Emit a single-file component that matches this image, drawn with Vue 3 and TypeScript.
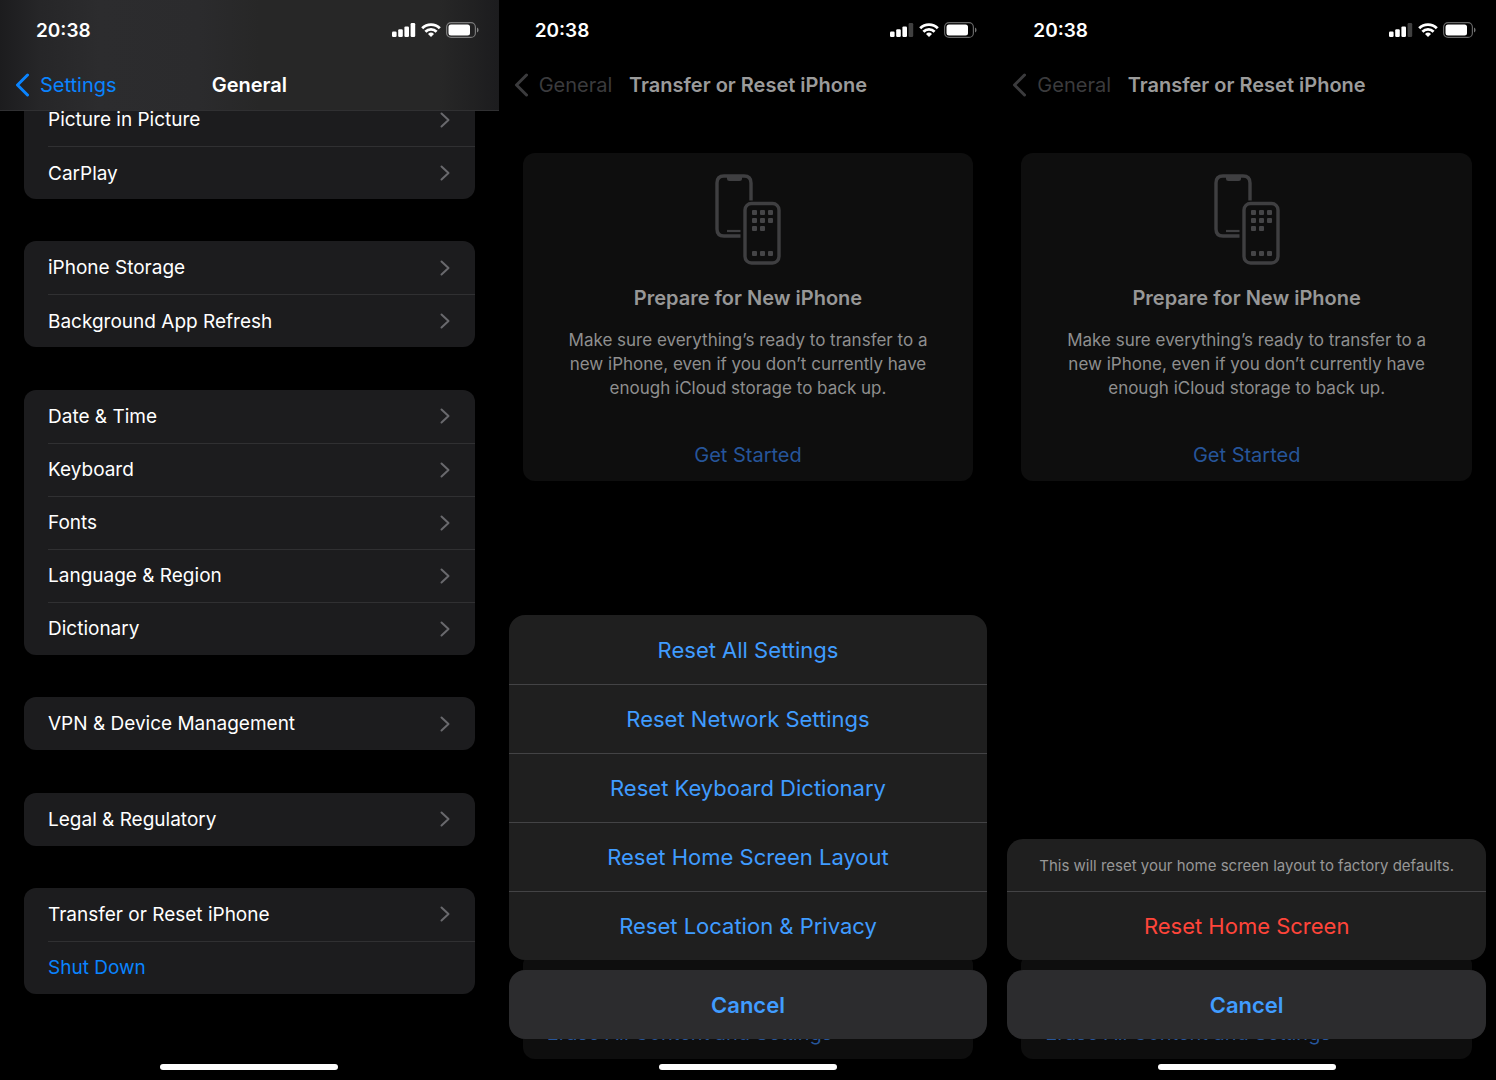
<script setup lang="ts">
interface Row {
  label: string
  action?: boolean
}

interface Phone {
  back: string
  title: string
  dimmed: boolean
  message?: string
  actions: string[]
  destructive?: boolean
}

const groups: Row[][] = [
  [{ label: 'Picture in Picture' }, { label: 'CarPlay' }],
  [{ label: 'iPhone Storage' }, { label: 'Background App Refresh' }],
  [
    { label: 'Date & Time' },
    { label: 'Keyboard' },
    { label: 'Fonts' },
    { label: 'Language & Region' },
    { label: 'Dictionary' },
  ],
  [{ label: 'VPN & Device Management' }],
  [{ label: 'Legal & Regulatory' }],
  [{ label: 'Transfer or Reset iPhone' }, { label: 'Shut Down', action: true }],
]

const phones: Phone[] = [
  { back: 'Settings', title: 'General', dimmed: false, actions: [] },
  {
    back: 'General',
    title: 'Transfer or Reset iPhone',
    dimmed: true,
    actions: [
      'Reset All Settings',
      'Reset Network Settings',
      'Reset Keyboard Dictionary',
      'Reset Home Screen Layout',
      'Reset Location & Privacy',
    ],
  },
  {
    back: 'General',
    title: 'Transfer or Reset iPhone',
    dimmed: true,
    message: 'This will reset your home screen layout to factory defaults.',
    actions: ['Reset Home Screen'],
    destructive: true,
  },
]

const appDots: [number, number][] = [
  [37, 36], [45, 36], [53, 36],
  [37, 44], [45, 44], [53, 44],
  [37, 52], [45, 52],
  [37, 77], [45, 77], [53, 77],
]
</script>

<template>
  <main class="board">
    <section v-for="(phone, i) in phones" :key="i" class="phone" :class="{ dimmed: phone.dimmed }">
      <header class="top">
        <div class="status">
          <time class="clock">20:38</time>
          <div class="indicators">
            <svg width="24" height="14" viewBox="0 0 24 14" fill="#fff" aria-hidden="true">
              <rect x="0" y="8.500" width="4.600" height="5.500" rx="1.200" />
              <rect x="6.200" y="6.200" width="4.600" height="7.800" rx="1.200" />
              <rect x="12.400" y="3.400" width="4.600" height="10.600" rx="1.200" />
              <rect x="18.600" y="0" width="4.600" height="14" rx="1.200" :opacity="phone.dimmed ? 0.25 : 1" />
            </svg>
            <svg width="20" height="14" viewBox="0 0 20 14" fill="none" stroke="#fff" stroke-width="2.800" aria-hidden="true">
              <path d="M1.200 5.200 A12.400 12.400 0 0 1 18.800 5.200" />
              <path d="M4.400 8.800 A7.900 7.900 0 0 1 15.600 8.800" />
              <path d="M10 14 L7 11 A4.300 4.300 0 0 1 13 11 Z" fill="#fff" stroke="none" />
            </svg>
            <svg width="33" height="16" viewBox="0 0 33 16" aria-hidden="true">
              <rect x="0.600" y="0.600" width="28.800" height="14.800" rx="4.500" fill="none" stroke="#fff" stroke-opacity="0.400" stroke-width="1.200" />
              <rect x="2.500" y="2.500" width="21.500" height="11" rx="2.500" fill="#fff" />
              <path d="M31 5.400 Q32.600 6.300 32.600 8 Q32.600 9.700 31 10.600 Z" fill="#fff" fill-opacity="0.450" />
            </svg>
          </div>
        </div>
        <nav class="nav">
          <a class="back" href="#">
            <svg width="14" height="24" viewBox="0 0 14 24" fill="none" stroke="currentColor" stroke-width="3" stroke-linecap="round" stroke-linejoin="round" aria-hidden="true">
              <path d="M12.500 2 L2.500 12 L12.500 22" />
            </svg>
            <span>{{ phone.back }}</span>
          </a>
          <h1 class="title">{{ phone.title }}</h1>
          <span class="nav-end"></span>
        </nav>
      </header>

      <div v-if="!phone.dimmed" class="groups">
        <ul v-for="(group, g) in groups" :key="g" class="group">
          <li v-for="row in group" :key="row.label" class="item">
            <button v-if="row.action" type="button" class="row link">{{ row.label }}</button>
            <a v-else class="row" href="#">
              <span>{{ row.label }}</span>
              <svg width="10" height="16" viewBox="0 0 10 16" fill="none" stroke="#69696d" stroke-width="2" stroke-linecap="round" stroke-linejoin="round" aria-hidden="true">
                <path d="M1.500 1.500 L8.500 8 L1.500 14.500" />
              </svg>
            </a>
          </li>
        </ul>
      </div>

      <template v-else>
        <article class="card">
          <svg width="66" height="92" viewBox="0 0 66 92" fill="none" stroke="#3f3f41" stroke-width="3.400" aria-hidden="true">
            <path d="M36 26.500 V9 Q36 2 29 2 H9 Q2 2 2 9 V55 Q2 62 9 62 H25.500" />
            <path d="M12 3 H27 V4.500 Q27 7 24.500 7 H14.500 Q12 7 12 4.500 Z" fill="#3f3f41" stroke="none" />
            <path d="M12 57 H25.500" stroke-width="2.200" />
            <rect x="30" y="29.500" width="34" height="59.500" rx="6.500" />
            <rect v-for="(dot, d) in appDots" :key="d" :x="dot[0]" :y="dot[1]" width="5" height="5" rx="1" fill="#454547" stroke="none" />
          </svg>
          <h2 class="card-title">Prepare for New iPhone</h2>
          <p class="card-text">
            Make sure everything’s ready to transfer to a new iPhone, even if you don’t currently have enough iCloud storage to back up.
          </p>
          <button type="button" class="start">Get Started</button>
        </article>
        <ul class="group under">
          <li class="item"><button type="button" class="row link">Reset</button></li>
          <li class="item"><button type="button" class="row link">Erase All Content and Settings</button></li>
        </ul>
        <div class="sheet" role="dialog" aria-label="Reset">
          <div class="options">
            <p v-if="phone.message" class="message">{{ phone.message }}</p>
            <button
              v-for="action in phone.actions"
              :key="action"
              type="button"
              class="option"
              :class="{ danger: phone.destructive }"
            >
              {{ action }}
            </button>
          </div>
          <button type="button" class="cancel">Cancel</button>
        </div>
      </template>

      <footer class="home"><span class="home-bar"></span></footer>
    </section>
  </main>
</template>

<style>
body {
  background: #000;
}
</style>

<style scoped>
.board {
  display: grid;
  grid-template-columns: repeat(3, minmax(0, 1fr));
  min-height: 100vh;
  background: #000;
  color: #fff;
  font-family: Inter, "Liberation Sans", sans-serif;
  font-size: 20px;
  line-height: 24px;
}

.phone {
  position: relative;
  display: flex;
  flex-direction: column;
}

button {
  border: 0;
  background: none;
  padding: 0;
  font: inherit;
  color: inherit;
}

a {
  color: inherit;
  text-decoration: none;
}

h1,
h2,
p,
ul {
  margin: 0;
  padding: 0;
  font-size: inherit;
}

.top {
  position: relative;
  z-index: 1;
  height: 111px;
  box-sizing: border-box;
  border-bottom: 1px solid #303032;
  background: linear-gradient(90deg, #1c1c1e 0, #262628 8%, #2c2c2e 20%, #2b2b2d 40%, #272727 52%, #272727 88%, #1c1c1e 100%);
}

.dimmed .top {
  background: none;
  border-color: transparent;
}

.status {
  display: flex;
  align-items: center;
  justify-content: space-between;
  height: 60px;
  padding: 0 20px 0 36px;
}

.clock {
  font-size: 19px;
  line-height: 25px;
  font-weight: 600;
}

.indicators {
  display: flex;
  align-items: center;
  gap: 5px;
}

.nav {
  display: flex;
  align-items: center;
  height: 50px;
  padding: 0 15px;
}

.back,
.nav-end {
  flex: 1 0 0;
}

.back {
  display: flex;
  align-items: center;
  gap: 11px;
  color: #0a84ff;
}

.dimmed .back {
  color: #3b3b3d;
}

.title {
  font-weight: 600;
  white-space: nowrap;
}

.dimmed .title {
  color: #9b9b9b;
}

.groups {
  flex: 1;
  display: flex;
  flex-direction: column;
  justify-content: space-between;
  gap: 24px;
  margin: -18px 24px 0;
}

.group {
  list-style: none;
  border-radius: 12px;
  background: #1c1c1e;
  font-size: 19px;
  line-height: 25px;
}

.item {
  padding-left: 24px;
}

.row {
  display: flex;
  align-items: center;
  justify-content: space-between;
  width: 100%;
  height: 53px;
  box-sizing: border-box;
  padding-right: 25px;
}

.item + .item .row {
  border-top: 1px solid #303032;
}

.link {
  color: #0a84ff;
}

.card {
  display: flex;
  flex-direction: column;
  align-items: center;
  margin: 42px 24px 0;
  padding: 21px 36px 14px;
  border-radius: 12px;
  background: #0e0e0e;
  color: #979797;
  text-align: center;
}

.card-title {
  margin-top: 20px;
  font-weight: 600;
}

.card-text {
  margin-top: 18px;
  font-size: 17px;
  color: #8f8f8f;
}

.start {
  margin-top: 43px;
  color: #26559a;
}

.under {
  margin: auto 24px 0;
  background: #0e0e0e;
  font-size: 20px;
}

.group.under .row {
  border-color: transparent;
  color: #26559a;
}

.sheet {
  position: absolute;
  right: 10px;
  bottom: 41px;
  left: 10px;
  display: flex;
  flex-direction: column;
  gap: 10px;
  font-size: 22px;
}

.options {
  display: flex;
  flex-direction: column;
  overflow: hidden;
  border-radius: 16px;
  background: #1f1f1f;
}

.message {
  padding: 14px 12px 13px;
  font-size: 15px;
  line-height: 25px;
  color: #979797;
  text-align: center;
}

.option,
.cancel {
  height: 69px;
  color: #409cff;
}

.option.danger {
  color: #ff453a;
}

.option + .option,
.message + .option {
  border-top: 1px solid #434345;
}

.cancel {
  border-radius: 16px;
  background: #2c2c2e;
  font-weight: 600;
}

.home {
  display: flex;
  align-items: flex-end;
  justify-content: center;
  height: 86px;
  padding-bottom: 10px;
  box-sizing: border-box;
}

.dimmed .home {
  height: 21px;
}

.home-bar {
  width: 178px;
  height: 6px;
  border-radius: 3px;
  background: #fff;
}
</style>
